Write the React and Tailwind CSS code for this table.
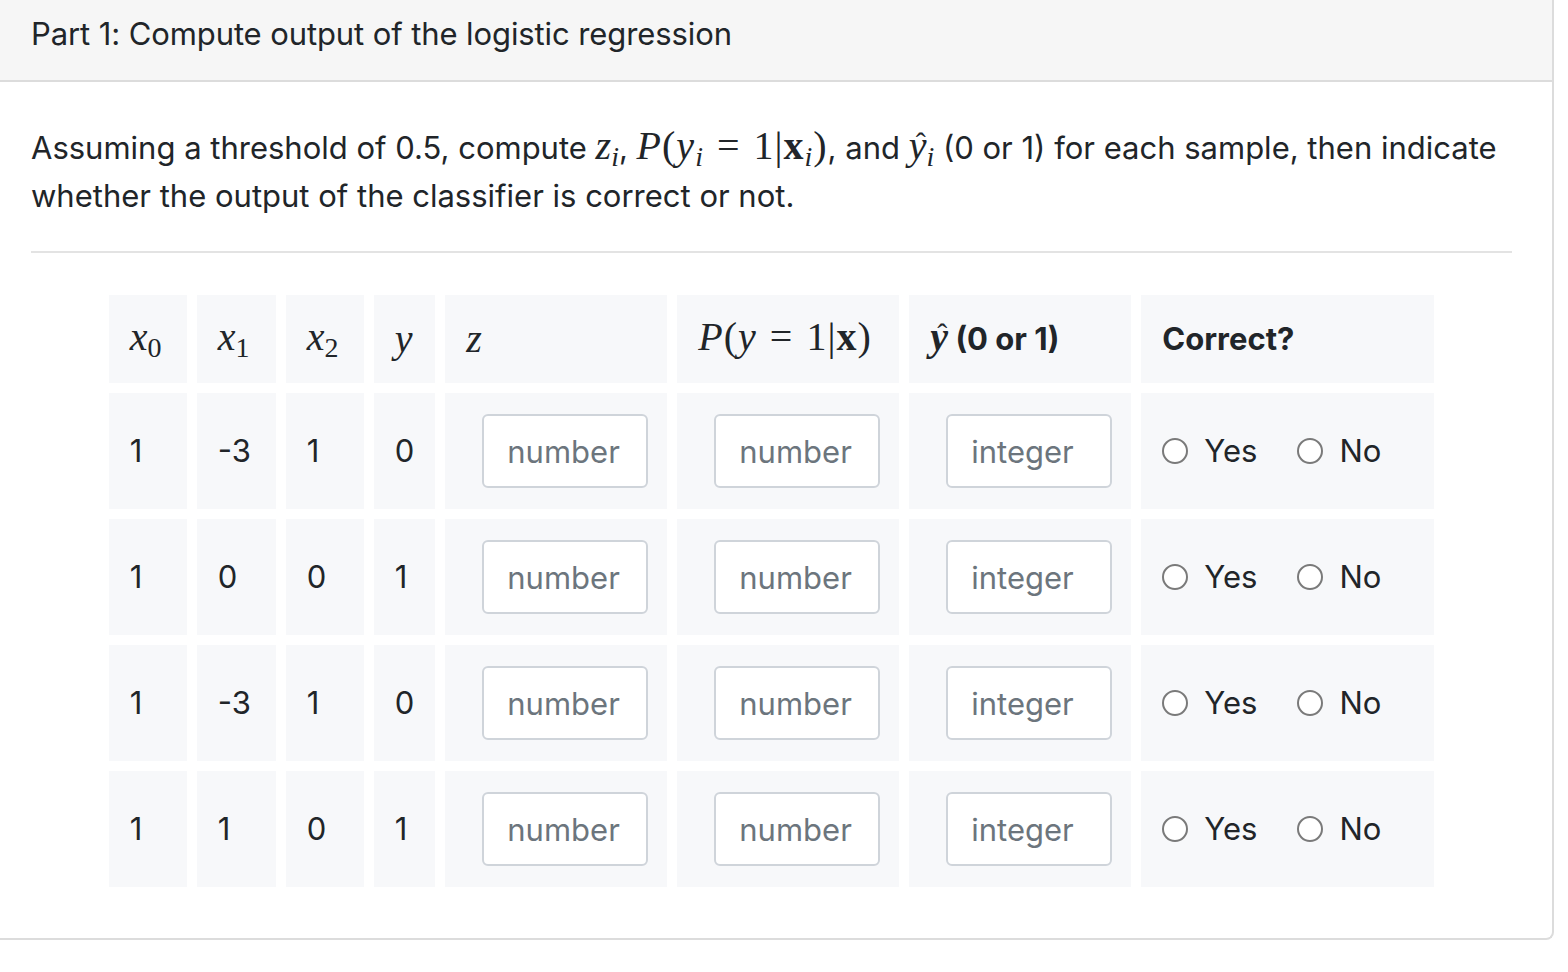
import React from 'react';

const rows = [
  [1, -3, 1, 0],
  [1, 0, 0, 1],
  [1, -3, 1, 0],
  [1, 1, 0, 1],
];

const mathFont = { fontFamily: '"Liberation Serif", "DejaVu Serif", serif' };

function Sub({ children, italic }) {
  return (
    <span className={`text-[0.7em] relative top-[0.25em] ${italic ? 'italic' : ''}`}>{children}</span>
  );
}

function MathX({ n }) {
  return (
    <span style={mathFont} className="text-[40px] leading-none">
      <span className="italic">x</span>
      <Sub>{n}</Sub>
    </span>
  );
}

function ProbX({ sub }) {
  return (
    <span style={mathFont} className="text-[40px] leading-none whitespace-nowrap tracking-[1px]">
      <span className="italic">P</span>(<span className="italic">y</span>
      {sub && <Sub italic>i</Sub>}
      <span className="mx-[13px]">=</span>1|<span className="font-bold">x</span>
      {sub && <Sub italic>i</Sub>})
    </span>
  );
}

function YHat({ sub }) {
  return (
    <span style={mathFont} className="text-[40px] leading-none relative inline-block">
      <span className="italic relative inline-block">
        y
        <span className="absolute left-[7px] top-[2px] not-italic font-normal text-[30px] leading-none">ˆ</span>
      </span>
      {sub && <Sub italic>i</Sub>}
    </span>
  );
}

function Field({ placeholder }) {
  return (
    <input
      type="text"
      placeholder={placeholder}
      className="w-[166px] h-[74px] px-[23px] rounded-[6px] border-2 border-[#cfd4da] bg-white text-[31px] text-[#212529] placeholder:text-[#6c757d] outline-none"
    />
  );
}

function Radio({ label, name }) {
  return (
    <label className="flex items-center gap-[16px]">
      <input
        type="radio"
        name={name}
        className="appearance-none w-[26px] h-[26px] rounded-full border-2 border-[#7a7a7a] bg-white"
      />
      <span>{label}</span>
    </label>
  );
}

const cell = 'bg-[#f7f8fa] px-[21px] py-0 text-left align-middle';
const inputCell = 'bg-[#f7f8fa] pl-[37px] pr-[19px] py-0 text-left align-middle';

export default function App() {
  return (
    <div
      className="bg-white text-[#212529] min-h-[972px]"
      style={{ fontFamily: 'Inter, "Liberation Sans", Arial, sans-serif' }}
    >
      <div className="w-[1554px] border-r-2 border-b-2 border-[#dcdcdc] rounded-br-[8px]">
        {/* card header */}
        <div className="h-[82px] bg-[#f6f6f6] border-b-2 border-[#dcdcdc] pl-[31px] pt-[10px]">
          <h2 className="text-[31px] leading-[48px] font-normal tracking-[-0.1px]">
            Part 1: Compute output of the logistic regression
          </h2>
        </div>

        {/* card body */}
        <div className="pl-[31px] pr-[40px] pt-[42px] pb-[41px]">
          <p className="text-[31px] leading-[48px]">
            Assuming a threshold of 0.5, compute{' '}
            <span style={mathFont} className="text-[40px] leading-none">
              <span className="italic">z</span>
              <Sub italic>i</Sub>
            </span>
            , <ProbX sub />, and <YHat sub /> (0 or 1) for each sample, then indicate whether the output of the
            classifier is correct or not.
          </p>

          <hr className="mt-[31px] border-t-2 border-[#e3e3e3]" />

          <table className="mx-auto mt-[32px] border-separate border-spacing-[10px] text-[31px]">
            <thead>
              <tr className="h-[88px]">
                <th className={`${cell} w-[78px] font-normal`}><MathX n="0" /></th>
                <th className={`${cell} w-[79px] font-normal`}><MathX n="1" /></th>
                <th className={`${cell} w-[78px] font-normal`}><MathX n="2" /></th>
                <th className={`${cell} w-[60px] font-normal`}>
                  <span style={mathFont} className="text-[40px] italic">y</span>
                </th>
                <th className={`${cell} w-[222px] font-normal`}>
                  <span style={mathFont} className="text-[40px] italic">z</span>
                </th>
                <th className={`${cell} w-[222px] font-normal`}><ProbX /></th>
                <th className={`${cell} w-[222px] font-bold`}>
                  <YHat /> (0 or 1)
                </th>
                <th className={`${cell} w-[293px] font-bold`}>Correct?</th>
              </tr>
            </thead>
            <tbody>
              {rows.map((r, i) => (
                <tr key={i} className="h-[116px]">
                  {r.map((v, j) => (
                    <td key={j} className={cell}>{v}</td>
                  ))}
                  <td className={inputCell}><Field placeholder="number" /></td>
                  <td className={inputCell}><Field placeholder="number" /></td>
                  <td className={inputCell}><Field placeholder="integer" /></td>
                  <td className={cell}>
                    <div className="flex items-center gap-[40px]">
                      <Radio label="Yes" name={`c${i}`} />
                      <Radio label="No" name={`c${i}`} />
                    </div>
                  </td>
                </tr>
              ))}
            </tbody>
          </table>
        </div>
      </div>
    </div>
  );
}
